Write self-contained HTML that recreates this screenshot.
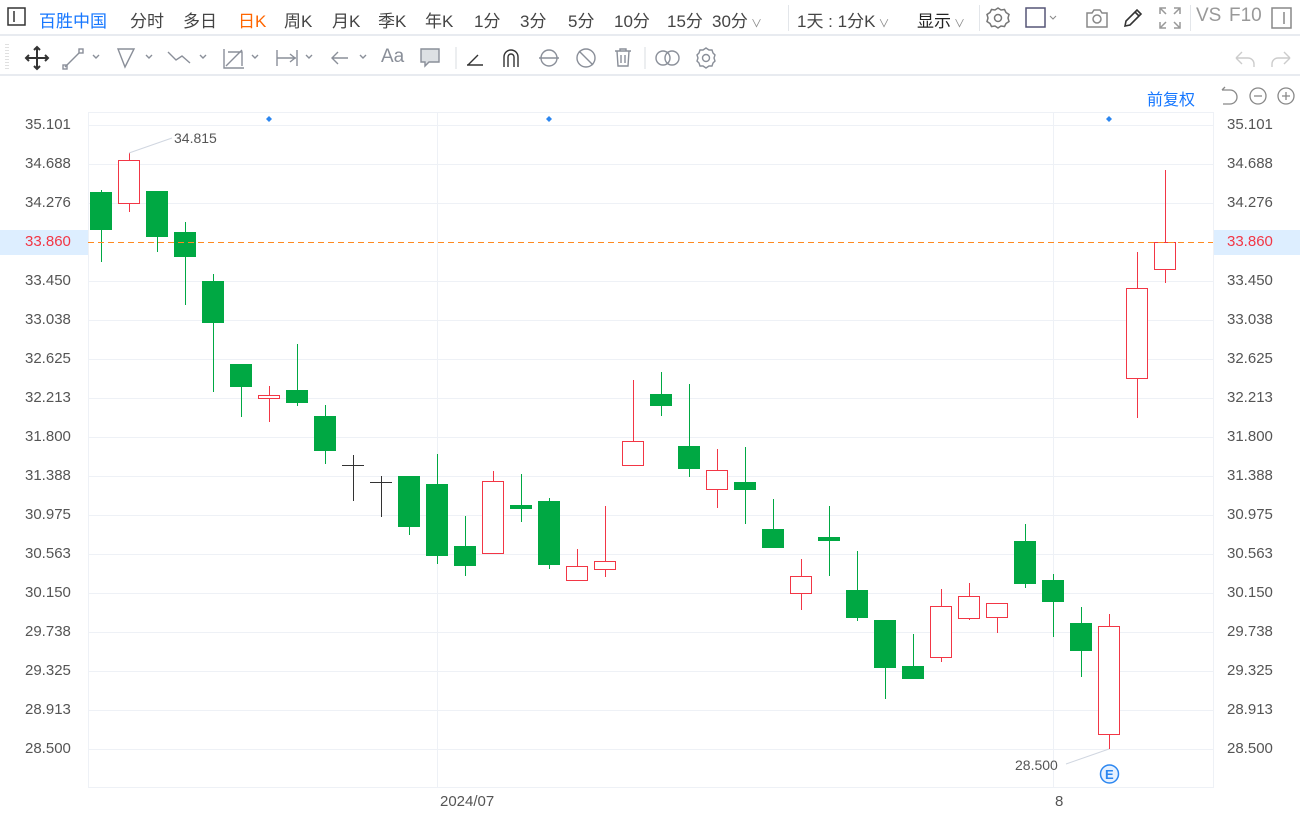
<!DOCTYPE html>
<html><head><meta charset="utf-8">
<style>
*{margin:0;padding:0;box-sizing:border-box}
body{width:1300px;height:820px;background:#fff;font-family:"Liberation Sans","Noto Sans CJK SC",sans-serif;position:relative;overflow:hidden;color:#333}
.tb1{position:absolute;left:0;top:0;width:1300px;height:36px;border-bottom:2px solid #e8ebf0}
.tb1 span{position:absolute;top:7px;font-size:17px;color:#444}
.tb2{position:absolute;left:0;top:38px;width:1300px;height:38px;border-bottom:2px solid #e8ebf0}
.ax{position:absolute;font-size:15px;color:#555}
</style></head><body>
<div class="tb1">
<svg style="position:absolute;left:7px;top:7px" width="20" height="20"><rect x="1" y="1" width="17" height="17" fill="none" stroke="#333" stroke-width="1.5"/><line x1="7" y1="4" x2="7" y2="15" stroke="#333" stroke-width="1.5"/></svg>
<span style="left:39px;color:#1677ff">百胜中国</span>
<span style="left:130px">分时</span>
<span style="left:183px">多日</span>
<span style="left:238px;color:#ff6600">日K</span>
<span style="left:284px">周K</span>
<span style="left:332px">月K</span>
<span style="left:378px">季K</span>
<span style="left:425px">年K</span>
<span style="left:474px">1分</span>
<span style="left:520px">3分</span>
<span style="left:568px">5分</span>
<span style="left:614px">10分</span>
<span style="left:667px">15分</span>
<span style="left:712px">30分<small style="font-size:11px;color:#888"> ∨</small></span>
<span style="left:788px;top:5px;height:26px;border-left:1px solid #e3e6ea"></span>
<span style="left:797px">1天 : 1分K<small style="font-size:11px;color:#888"> ∨</small></span>
<span style="left:917px;color:#222">显示<small style="font-size:11px;color:#888"> ∨</small></span>
<span style="left:979px;top:5px;height:26px;border-left:1px solid #e3e6ea"></span>
<svg style="position:absolute;left:986px;top:6px" width="24" height="24" fill="none" stroke="#777" stroke-width="1.5"><path d="M12 2l3 2 3.5-.5 1.5 3 3 2-1 3.5 1 3.5-3 2-1.5 3-3.5-.5-3 2-3-2-3.5.5-1.5-3-3-2 1-3.5-1-3.5 3-2 1.5-3L9 4z"/><circle cx="12" cy="12" r="3.5"/></svg>
<svg style="position:absolute;left:1024px;top:6px" width="36" height="24" fill="none" stroke="#557" stroke-width="1.5"><rect x="2" y="2" width="19" height="19"/><path d="M26 10l3 3 3-3" stroke="#888" stroke-width="1"/></svg>
<svg style="position:absolute;left:1085px;top:7px" width="24" height="22" fill="none" stroke="#888" stroke-width="1.5"><path d="M2 6h5l2-3h6l2 3h5v14H2z"/><circle cx="12" cy="12" r="4"/></svg>
<svg style="position:absolute;left:1121px;top:6px" width="24" height="24" fill="none" stroke="#333" stroke-width="1.6"><path d="M4 20l1-5L16 4l4 4L9 19z M14 6l4 4"/></svg>
<svg style="position:absolute;left:1158px;top:6px" width="24" height="24" fill="none" stroke="#999" stroke-width="1.5"><path d="M2 8V2h6M16 2h6v6M22 16v6h-6M8 22H2v-6M2 2l6 6M22 2l-6 6M22 22l-6-6M2 22l6-6"/></svg>
<span style="left:1190px;top:5px;height:26px;border-left:1px solid #e3e6ea"></span>
<span style="left:1196px;color:#999;font-size:19px;top:5px">VS</span>
<span style="left:1229px;color:#999;font-size:19px;top:5px">F10</span>
<svg style="position:absolute;left:1270px;top:6px" width="24" height="24" fill="none" stroke="#888" stroke-width="1.5"><rect x="2" y="2" width="19" height="20"/><line x1="14" y1="6" x2="14" y2="18"/></svg>
</div>
<div class="tb2">
<svg width="1300" height="38" fill="none" stroke="#8a8f99" stroke-width="1.4">
<path d="M7 6v26" stroke="#e0e0e0" stroke-dasharray="1 2" stroke-width="4"/>
<g stroke="#333" stroke-width="2"><path d="M37 9v22M26 20h22M34 12l3-3 3 3M34 28l3 3 3-3M29 17l-3 3 3 3M45 17l3 3-3 3"/></g>
<path d="M65 29l14-14"/><rect x="63" y="27" width="4" height="4"/><rect x="79" y="11" width="4" height="4"/><path d="M93 17l3 3 3-3"/>
<path d="M118 11h16l-9 18z"/><path d="M146 17l3 3 3-3"/>
<path d="M168 14l8 8 6-4 8 7"/><path d="M200 17l3 3 3-3"/>
<path d="M224 11v19h20M226 28l16-16M228 14h14v14"/><path d="M252 17l3 3 3-3"/>
<path d="M277 12v16M277 20h19M297 12v16M290 16l5 4-5 4"/><path d="M306 17l3 3 3-3"/>
<path d="M332 20h16M338 14l-6 6 6 6"/><path d="M360 17l3 3 3-3"/>
<path d="M421 11h18v13h-10l-4 4v-4h-4z" fill="#dde0e4"/>
<path d="M456 9v22" stroke="#e3e6ea"/>
<path d="M467 27h16M468 27l10-10" stroke="#333"/>
<path d="M504 29V19a7 7 0 0 1 14 0v10M508 29V19a3 3 0 0 1 6 0v10" stroke="#333"/>
<ellipse cx="549" cy="20" rx="8" ry="8"/><path d="M539 20h20"/>
<circle cx="586" cy="20" r="9"/><path d="M579 13l14 14"/>
<path d="M615 13h16M620 13v-2h6v2M617 13l1 15h10l1-15M621 17v8M625 17v8"/>
<path d="M645 9v22" stroke="#e3e6ea"/>
<circle cx="663" cy="20" r="7"/><circle cx="672" cy="20" r="7"/>
<circle cx="706" cy="20" r="3.5"/><path d="M706 10l3 2 3 0 1 3 2 2-1 3 1 3-2 2-1 3-3 0-3 2-3-2-3 0-1-3-2-2 1-3-1-3 2-2 1-3 3 0z"/>
<path d="M1236 20l6-6M1236 20l6 6M1236 20h12a6 6 0 0 1 6 6v3" stroke="#ccc"/>
<path d="M1290 20l-6-6M1290 20l-6 6M1290 20h-12a6 6 0 0 0-6 6v3" stroke="#ccc"/>
</svg>
<span style="position:absolute;left:381px;top:8px;font-size:19px;color:#8a8f99">Aa</span>
</div>
<span class="ax" style="left:1147px;top:86px;color:#1677ff;font-size:16px">前复权</span>
<svg style="position:absolute;left:1218px;top:85px" width="82" height="22" fill="none" stroke="#888" stroke-width="1.3"><path d="M4 5h8a7 7 0 0 1 0 14H5M4 5l3-3"/><circle cx="40" cy="11" r="8"/><path d="M36 11h8"/><circle cx="68" cy="11" r="8"/><path d="M64 11h8M68 7v8"/></svg>
<div style="position:absolute;left:0;top:230px;width:88px;height:25px;background:#ddeeff"></div>
<div style="position:absolute;left:1214px;top:230px;width:86px;height:25px;background:#ddeeff"></div>
<svg id="ch" style="position:absolute;left:0;top:0" width="1300" height="820"></svg>
<div id="labels"></div>
<span class="ax" style="left:440px;top:793px">2024/07</span>
<span class="ax" style="left:1055px;top:793px">8</span>
<script>
var s='';
var prices=['35.101','34.688','34.276','33.860','33.450','33.038','32.625','32.213','31.800','31.388','30.975','30.563','30.150','29.738','29.325','28.913','28.500'];
var L='';
for(var i=0;i<17;i++){var y=125+i*39;if(i!=3)s+='<line x1="88" x2="1213" y1="'+(y+.5)+'" y2="'+(y+.5)+'" stroke="#eef1f6"/>';
var c=i==3?'#f23645':'#555';
L+='<span class="ax" style="left:25px;top:'+(y-9)+'px;color:'+c+'">'+prices[i]+'</span><span class="ax" style="left:1227px;top:'+(y-9)+'px;color:'+c+'">'+prices[i]+'</span>';}
document.getElementById('labels').innerHTML=L;
s+='<line x1="437.5" x2="437.5" y1="112" y2="787" stroke="#eef1f6"/><line x1="1053.5" x2="1053.5" y1="112" y2="787" stroke="#eef1f6"/>';
s+='<rect x="88.5" y="112.5" width="1125" height="675" fill="none" stroke="#eef1f6"/>';
var d=[['g',192,230,190,262],['r',160,203,153,212],['g',191,237,191,252],['g',232,257,222,305],['g',281,323,274,392],['g',364,387,364,417],['r',395,398,386,422],['g',390,403,344,406],['g',416,451,405,464],['d',465,465,455,501],['d',482,482,476,517],['g',476,527,476,535],['g',484,556,454,564],['g',546,566,516,576],['r',481,553,471,554],['g',505,509,474,522],['g',501,565,498,569],['r',566,580,549,580],['r',561,569,506,577],['r',441,465,380,465],['g',394,406,372,416],['g',446,469,384,477],['r',470,489,449,508],['g',482,490,447,524],['g',529,548,499,548],['r',576,593,559,610],['g',537,541,506,576],['g',590,618,551,621],['g',620,668,620,699],['g',666,679,634,679],['r',606,657,589,662],['r',596,618,583,620],['r',603,617,603,633],['g',541,584,524,588],['g',580,602,574,637],['g',623,651,607,677],['r',626,734,614,749],['r',288,378,252,418],['r',242,269,170,283]];
for(var k=0;k<d.length;k++){var x=101+k*28,c=d[k];
if(c[0]=='g'){s+='<line x1="'+(x+.5)+'" x2="'+(x+.5)+'" y1="'+c[3]+'" y2="'+c[4]+'" stroke="#00a843"/><rect x="'+(x-11)+'" y="'+c[1]+'" width="22" height="'+Math.max(2,c[2]-c[1])+'" fill="#00a843"/>';}
else if(c[0]=='r'){s+='<line x1="'+(x+.5)+'" x2="'+(x+.5)+'" y1="'+c[3]+'" y2="'+c[4]+'" stroke="#f23645"/><rect x="'+(x-10.5)+'" y="'+(c[1]+.5)+'" width="21" height="'+Math.max(2,c[2]-c[1])+'" fill="#fff" stroke="#f23645"/>';}
else{s+='<line x1="'+(x+.5)+'" x2="'+(x+.5)+'" y1="'+c[3]+'" y2="'+c[4]+'" stroke="#333"/><line x1="'+(x-11)+'" x2="'+(x+11)+'" y1="'+(c[1]+.5)+'" y2="'+(c[1]+.5)+'" stroke="#333"/>';}}
s+='<line x1="88" x2="1213" y1="242.5" y2="242.5" stroke="#ff8a1f" stroke-dasharray="6 4"/>';
s+='<line x1="129" y1="153" x2="172" y2="138" stroke="#d0d6e0"/><text x="174" y="143" font-size="14" fill="#555" font-family="Liberation Sans">34.815</text>';
s+='<line x1="1109" y1="749" x2="1066" y2="764" stroke="#d0d6e0"/><text x="1015" y="770" font-size="14" fill="#555" font-family="Liberation Sans">28.500</text>';
s+='<circle cx="1109.5" cy="774" r="9" fill="#e6f1ff" stroke="#2b86f0" stroke-width="1.5"/><text x="1105" y="779" font-size="13" fill="#2b86f0" font-family="Liberation Sans" font-weight="bold">E</text>';
[269,549,1109].forEach(function(x){s+='<path d="M'+x+' 116l3 3-3 3-3-3z" fill="#2b86f0"/>';});
document.getElementById('ch').innerHTML=s;
</script>
</body></html>
